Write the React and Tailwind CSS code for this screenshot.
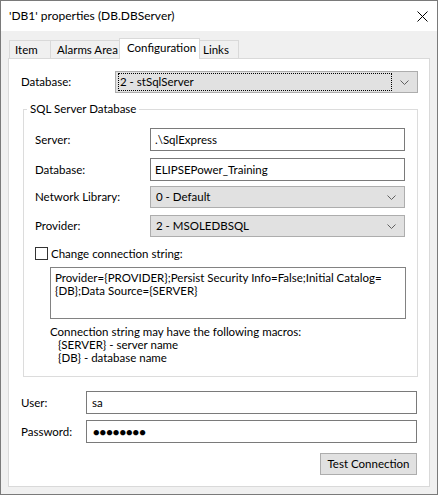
import React from "react";

const Chevron = () => (
  <svg width="9" height="5" viewBox="0 0 9 5" className="shrink-0">
    <path d="M0.5 0.5 L4.5 4.5 L8.5 0.5" fill="none" stroke="#606060" strokeWidth="1" />
  </svg>
);

const Select = ({ value, w, focused }) => (
  <div className={`${w} h-[22px] bg-[#e1e1e1] border border-[#adadad] flex items-center pl-[2px] pr-[8px]`}>
    <div className={`flex-1 h-[18px] flex items-center mr-[8px] ${focused ? "border border-dotted border-black pl-[1px]" : "border border-transparent pl-[2px]"}`}>
      {value}
    </div>
    <Chevron />
  </div>
);

const Input = ({ value, w, h = "h-[23px]", pl = "pl-[4px]" }) => (
  <div className={`${w} ${h} bg-white border border-[#7a7a7a] flex items-center ${pl}`}>{value}</div>
);

export default function App() {
  return (
    <div
      className="w-[438px] h-[495px] border border-[#7a7a7a] bg-[#f0f0f0] flex flex-col text-[11.5px] text-black leading-[16px] whitespace-nowrap"
      style={{ fontFamily: 'Lato, "Liberation Sans", sans-serif' }}
    >
      {/* Title bar */}
      <div className="h-[30px] bg-white flex items-center justify-between pl-[8px] pr-[9px] text-[12px]">
        <span>'DB1' properties (DB.DBServer)</span>
        <svg width="11" height="11" viewBox="0 0 11 11">
          <path d="M0.5 0.5 L10.5 10.5 M10.5 0.5 L0.5 10.5" stroke="#000" strokeWidth="1" />
        </svg>
      </div>

      {/* Body */}
      <div className="px-[7px] pt-[7px]">
        {/* Tabs */}
        <div className="h-[20px] flex items-end pl-[1px]">
          <div className="w-[41px] h-[18px] border-l border-t border-[#d9d9d9] bg-[#f0f0f0] pl-[5px] flex items-center">Item</div>
          <div className="w-[69px] h-[18px] border-l border-t border-[#d9d9d9] bg-[#f0f0f0] pl-[6px] flex items-center">Alarms Area</div>
          <div className="relative z-10 w-[81px] h-[21px] -mb-[1px] border-l border-t border-r border-[#d9d9d9] bg-white pl-[7px] flex items-center pb-[2px]">Configuration</div>
          <div className="w-[39px] h-[18px] border-t border-r border-[#d9d9d9] bg-[#f0f0f0] pl-[3px] flex items-center">Links</div>
        </div>

        {/* Panel */}
        <div className="h-[429px] bg-white border border-[#d9d9d9] pl-[12px] pt-[12px]">
          <div className="flex items-center h-[22px]">
            <div className="w-[94px]">Database:</div>
            <Select value="2 - stSqlServer" w="w-[303px]" focused />
          </div>

          {/* Group box */}
          <div className="relative ml-[2px] mt-[16px] w-[395px] border border-[#dcdcdc] pl-[11px] pt-[18px] pb-[12px]">
            <div className="absolute -top-[9px] left-[3px] bg-white px-[3px]">SQL Server Database</div>

            <div className="flex items-center">
              <div className="w-[115px]">Server:</div>
              <Input value=".\SqlExpress" w="w-[255px]" />
            </div>
            <div className="flex items-center mt-[7px]">
              <div className="w-[115px]">Database:</div>
              <Input value="ELIPSEPower_Training" w="w-[255px]" />
            </div>
            <div className="flex items-center mt-[5px]">
              <div className="w-[115px]">Network Library:</div>
              <Select value="0 - Default" w="w-[255px]" />
            </div>
            <div className="flex items-center mt-[7px]">
              <div className="w-[115px]">Provider:</div>
              <Select value="2 - MSOLEDBSQL" w="w-[255px]" />
            </div>

            <div className="flex items-center mt-[10px] h-[13px]">
              <div className="w-[13px] h-[13px] border border-[#333333] bg-white" />
              <div className="ml-[3px]">Change connection string:</div>
            </div>

            <div className="ml-[15px] mt-[7px] w-[356px] h-[52px] border border-[#828282] pl-[4px] pt-[3px] leading-[13px]">
              <div>Provider={"{PROVIDER}"};Persist Security Info=False;Initial Catalog=</div>
              <div>{"{DB}"};Data Source={"{SERVER}"}</div>
            </div>

            <div className="ml-[15px] mt-[6px] leading-[13px]">
              <div>Connection string may have the following macros:</div>
              <div className="pl-[8px]">{"{SERVER}"} - server name</div>
              <div className="pl-[8px]">{"{DB}"} - database name</div>
            </div>
          </div>

          <div className="flex items-center mt-[14px]">
            <div className="w-[65px]">User:</div>
            <Input value="sa" w="w-[331px]" pl="pl-[5px]" />
          </div>
          <div className="flex items-center mt-[6px]">
            <div className="w-[65px]">Password:</div>
            <Input value={<span className="text-[11px] tracking-[0px]">●●●●●●●●</span>} w="w-[331px]" pl="pl-[6px]" />
          </div>

          <div className="w-[396px] flex justify-end mt-[10px]">
            <div className="w-[97px] h-[22px] bg-[#e1e1e1] border border-[#adadad] flex items-center justify-center">
              Test Connection
            </div>
          </div>
        </div>
      </div>
    </div>
  );
}
